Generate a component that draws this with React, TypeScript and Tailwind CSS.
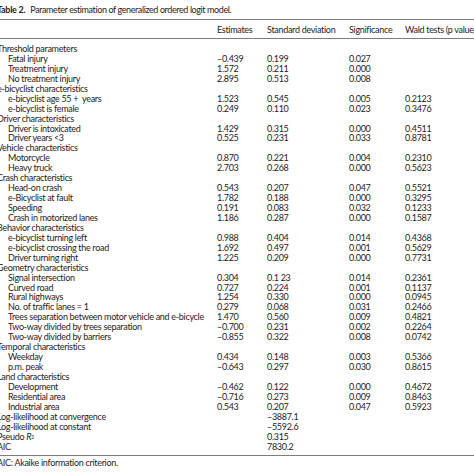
import React from "react";

type Row = { l: string | React.ReactNode; c?: boolean; v?: string[] };

const rows: Row[] = [
  { l: "Threshold parameters", c: true },
  { l: "Fatal injury", v: ["–0.439", "0.199", "0.027", ""] },
  { l: "Treatment injury", v: ["1.572", "0.211", "0.000", ""] },
  { l: "No treatment injury", v: ["2.895", "0.513", "0.008", ""] },
  { l: "e-bicyclist characteristics", c: true },
  { l: "e-bicyclist age 55 +  years", v: ["1.523", "0.545", "0.005", "0.2123"] },
  { l: "e-bicyclist is female", v: ["0.249", "0.110", "0.023", "0.3476"] },
  { l: "Driver characteristics", c: true },
  { l: "Driver is intoxicated", v: ["1.429", "0.315", "0.000", "0.4511"] },
  { l: "Driver years <3", v: ["0.525", "0.231", "0.033", "0.8781"] },
  { l: "Vehicle characteristics", c: true },
  { l: "Motorcycle", v: ["0.870", "0.221", "0.004", "0.2310"] },
  { l: "Heavy truck", v: ["2.703", "0.268", "0.000", "0.5623"] },
  { l: "Crash characteristics", c: true },
  { l: "Head-on crash", v: ["0.543", "0.207", "0.047", "0.5521"] },
  { l: "e-Bicyclist at fault", v: ["1.782", "0.188", "0.000", "0.3295"] },
  { l: "Speeding", v: ["0.191", "0.083", "0.032", "0.1233"] },
  { l: "Crash in motorized lanes", v: ["1.186", "0.287", "0.000", "0.1587"] },
  { l: "Behavior characteristics", c: true },
  { l: "e-bicyclist turning left", v: ["0.988", "0.404", "0.014", "0.4368"] },
  { l: "e-bicyclist crossing the road", v: ["1.692", "0.497", "0.001", "0.5629"] },
  { l: "Driver turning right", v: ["1.225", "0.209", "0.000", "0.7731"] },
  { l: "Geometry characteristics", c: true },
  { l: "Signal intersection", v: ["0.304", "0.1 23", "0.014", "0.2361"] },
  { l: "Curved road", v: ["0.727", "0.224", "0.001", "0.1137"] },
  { l: "Rural highways", v: ["1.254", "0.330", "0.000", "0.0945"] },
  { l: "No. of traffic lanes = 1", v: ["0.279", "0.068", "0.031", "0.2466"] },
  { l: "Trees separation between motor vehicle and e-bicycle", v: ["1.470", "0.560", "0.009", "0.4821"] },
  { l: "Two-way divided by trees separation", v: ["–0.700", "0.231", "0.002", "0.2264"] },
  { l: "Two-way divided by barriers", v: ["–0.855", "0.322", "0.008", "0.0742"] },
  { l: "Temporal characteristics", c: true },
  { l: "Weekday", v: ["0.434", "0.148", "0.003", "0.5366"] },
  { l: "p.m. peak", v: ["–0.643", "0.297", "0.030", "0.8615"] },
  { l: "Land characteristics", c: true },
  { l: "Development", v: ["–0.462", "0.122", "0.000", "0.4672"] },
  { l: "Residential area", v: ["–0.716", "0.273", "0.009", "0.8463"] },
  { l: "Industrial area", v: ["0.543", "0.207", "0.047", "0.5923"] },
  { l: "Log-likelihood at convergence", c: true, v: ["", "–3887.1", "", ""] },
  { l: "Log-likelihood at constant", c: true, v: ["", "–5592.6", "", ""] },
  {
    l: (
      <>
        Pseudo <i>R</i>
        <sup className="text-[5px] relative -top-[1px]">2</sup>
      </>
    ),
    c: true,
    v: ["", "0.315", "", ""],
  },
  { l: "AIC", c: true, v: ["", "7830.2", "", ""] },
];

const grid = "grid grid-cols-[220px_50px_82px_56px_1fr] whitespace-pre";

export default function App() {
  return (
    <div
      className="w-[474px] h-[474px] overflow-hidden bg-white text-[#1f1b1c] text-[9px] leading-[10px] tracking-[-0.3px]"
      style={{ fontFamily: "Lato, 'Open Sans', sans-serif" }}
    >
      <div className="ml-[-3px] w-[477px]">
        <div className="h-[19px] flex items-center pt-[1px]">
          <span className="font-bold">Table 2.</span>
          <span className="ml-[5px] tracking-[-0.4px]">Parameter estimation of generalized ordered logit model.</span>
        </div>
        <div className="h-[1px] bg-[#7d7d7d]" />
        <div className={`${grid} h-[18px] items-center pt-[2px]`}>
          <div />
          <div>Estimates</div>
          <div>Standard deviation</div>
          <div>Significance</div>
          <div>Wald tests (p value)</div>
        </div>
        <div className="h-[1px] bg-[#7d7d7d]" />
        <div className="pt-[5px] pb-[4px]">
          {rows.map((r, i) => (
            <div key={i} className={`${grid} h-[9.95px] items-center`}>
              <div className={r.c ? "" : "pl-[11px]"}>{r.l}</div>
              {(r.v ?? ["", "", "", ""]).map((x, j) => (
                <div key={j}>{x}</div>
              ))}
            </div>
          ))}
        </div>
        <div className="h-[1px] bg-[#7d7d7d]" />
        <div className="pt-[2px] h-[12px] flex items-center">AIC: Akaike information criterion.</div>
      </div>
    </div>
  );
}
